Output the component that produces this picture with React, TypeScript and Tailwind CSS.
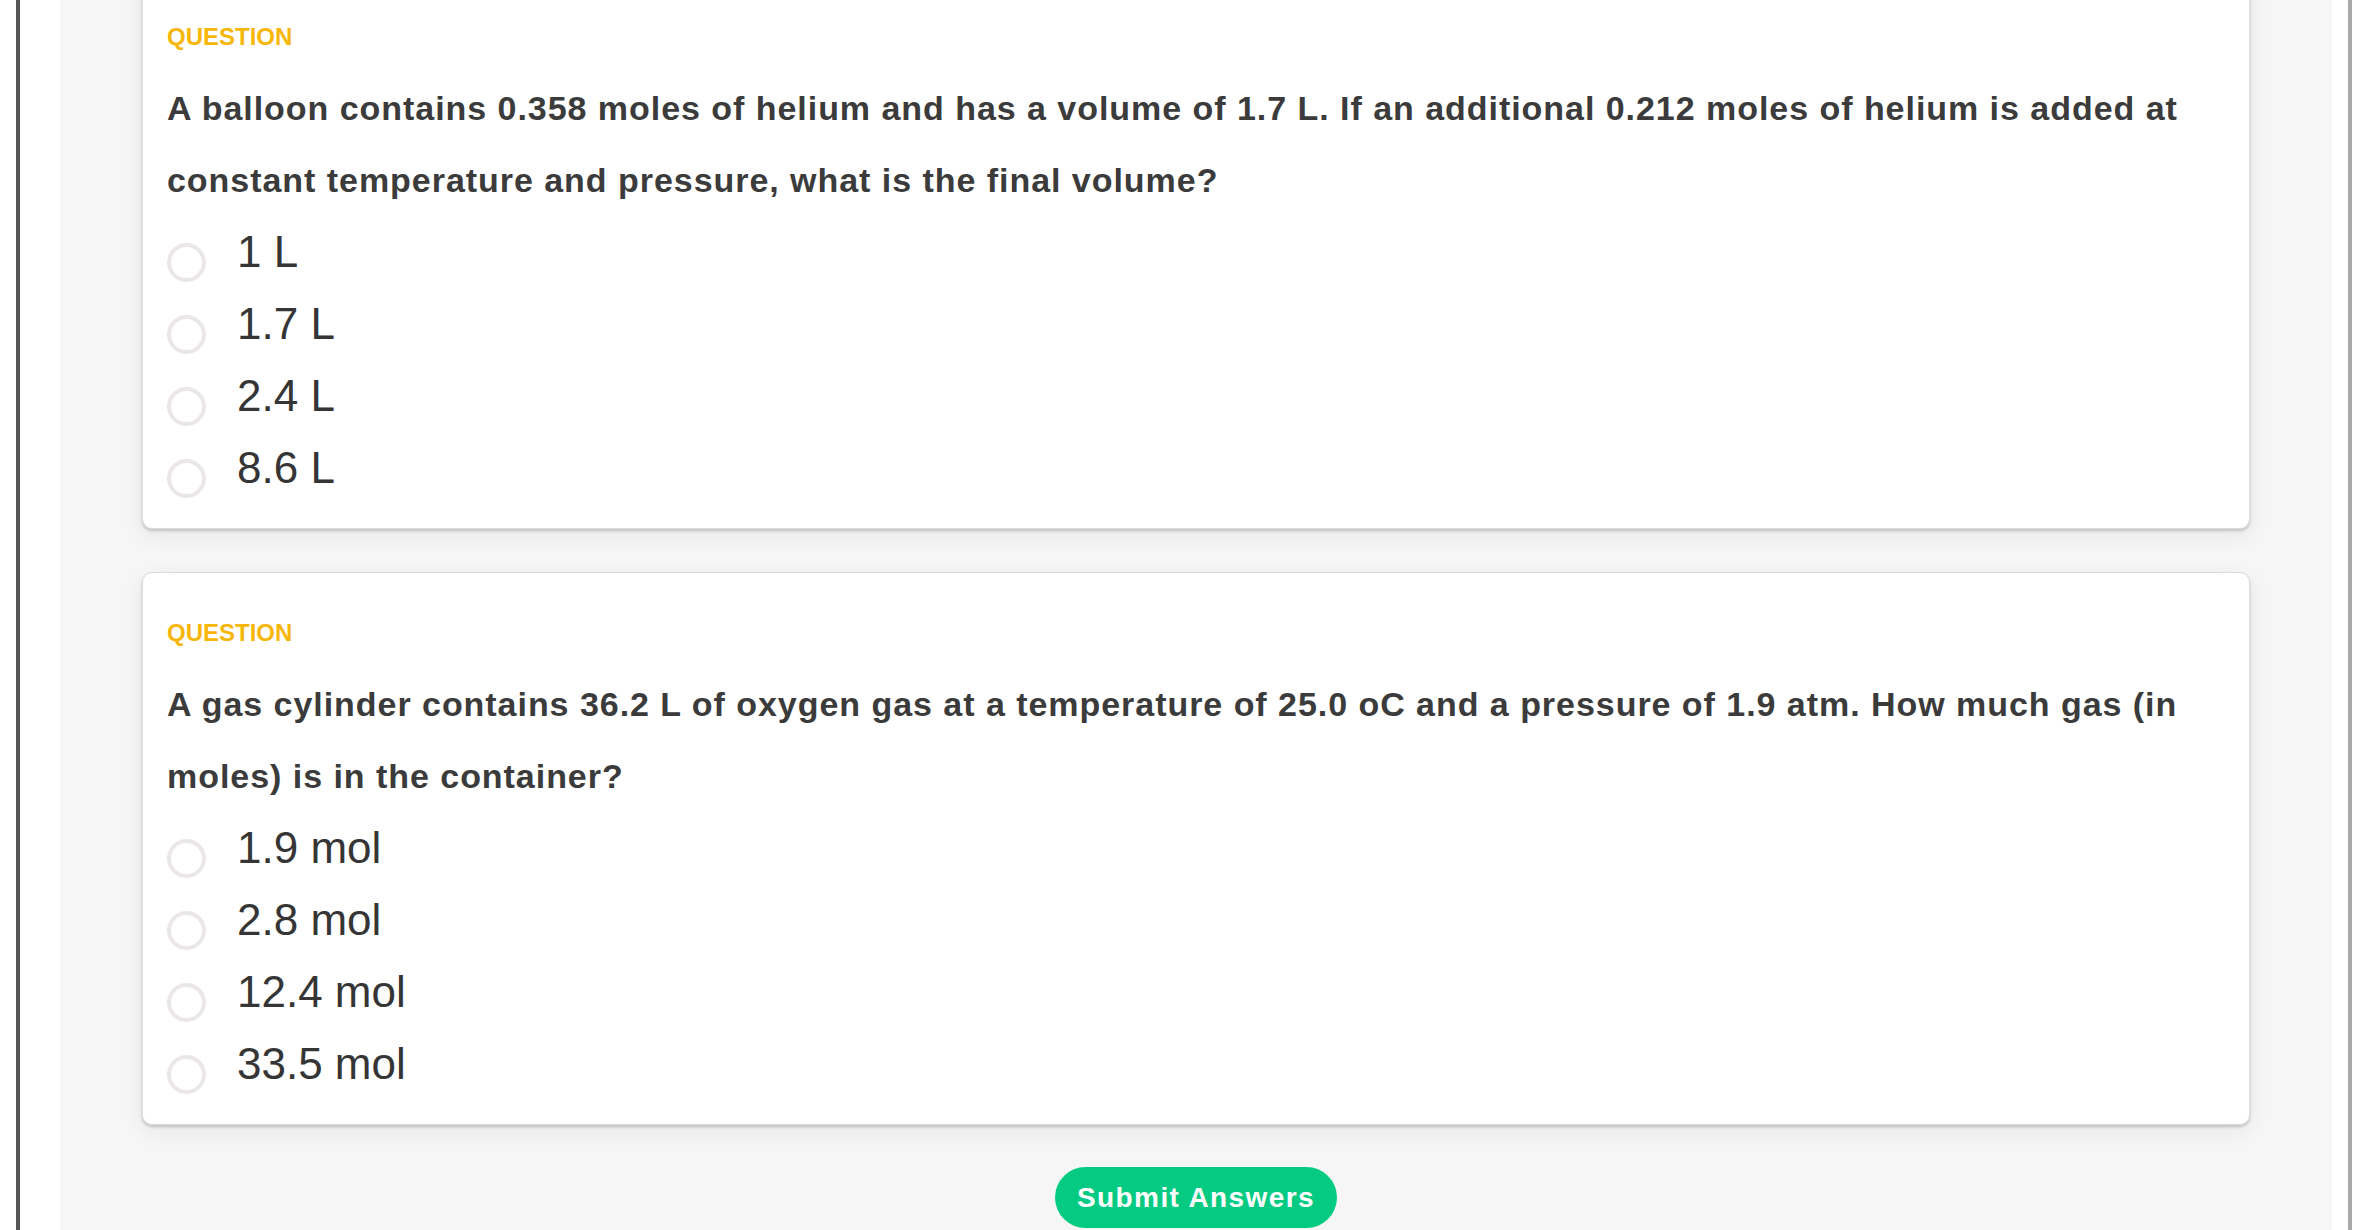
import { useState } from 'react'

type Question = {
  id: string
  text: string
  options: string[]
}

const questions: Question[] = [
  {
    id: 'q1',
    text: 'A balloon contains 0.358 moles of helium and has a volume of 1.7 L. If an additional 0.212 moles of helium is added at constant temperature and pressure, what is the final volume?',
    options: ['1 L', '1.7 L', '2.4 L', '8.6 L'],
  },
  {
    id: 'q2',
    text: 'A gas cylinder contains 36.2 L of oxygen gas at a temperature of 25.0 oC and a pressure of 1.9 atm. How much gas (in moles) is in the container?',
    options: ['1.9 mol', '2.8 mol', '12.4 mol', '33.5 mol'],
  },
]

function QuestionCard({
  question,
  value,
  onChange,
  className,
}: {
  question: Question
  value?: string
  onChange: (v: string) => void
  className?: string
}) {
  return (
    <div
      className={`rounded-[10px] border border-[#dcdcdc] bg-white p-6 shadow-[0_2px_3px_rgba(0,0,0,0.18),0_6px_22px_rgba(0,0,0,0.07)] ${className ?? ''}`}
    >
      {/* Section label */}
      <div className="mt-[23px] mb-[22px] text-[24px] font-bold leading-[26px] text-[#f6b60a] uppercase">
        Question
      </div>

      <div className="text-[34px] font-bold leading-[72px] tracking-[0.96px] text-[#3b3b3b]">
        {question.text}
      </div>

      <div className="flex flex-col">
        {question.options.map((opt) => (
          <label key={opt} className="flex h-[72px] cursor-pointer items-start">
            <input
              type="radio"
              name={question.id}
              checked={value === opt}
              onChange={() => onChange(opt)}
              className="mt-[27px] size-[39px] shrink-0 cursor-pointer appearance-none rounded-full border-4 border-[#ebe7e7] bg-white checked:border-[#05cb82]"
            />
            <span className="ml-[31px] text-[44px] leading-[72px] text-[#353535]">{opt}</span>
          </label>
        ))}
      </div>
    </div>
  )
}

export default function App() {
  const [answers, setAnswers] = useState<Record<string, string>>({})

  return (
    <div className="flex h-[1230px] w-[2360px] overflow-hidden bg-white font-['Liberation_Sans','Helvetica_Neue',Arial,sans-serif]">
      {/* Left frame line */}
      <div className="ml-4 w-1 shrink-0 bg-[#555555]" />

      <div className="ml-10 flex w-[2272px] shrink-0 flex-col bg-[#f6f6f6] px-[82px]">
        {questions.map((q, i) => (
          <QuestionCard
            key={q.id}
            question={q}
            value={answers[q.id]}
            onChange={(v) => setAnswers((a) => ({ ...a, [q.id]: v }))}
            className={i === 0 ? '-mt-6' : 'mt-[43px]'}
          />
        ))}

        <div className="mt-[42px] flex justify-center">
          <button className="flex h-[61px] w-[282px] items-center justify-center rounded-full bg-[#05cb82] text-[28px] font-bold tracking-[1.4px] text-white">
            Submit Answers
          </button>
        </div>
      </div>

      {/* Right frame line */}
      <div className="ml-4 w-1 shrink-0 bg-[#a8a8a8]" />
    </div>
  )
}
